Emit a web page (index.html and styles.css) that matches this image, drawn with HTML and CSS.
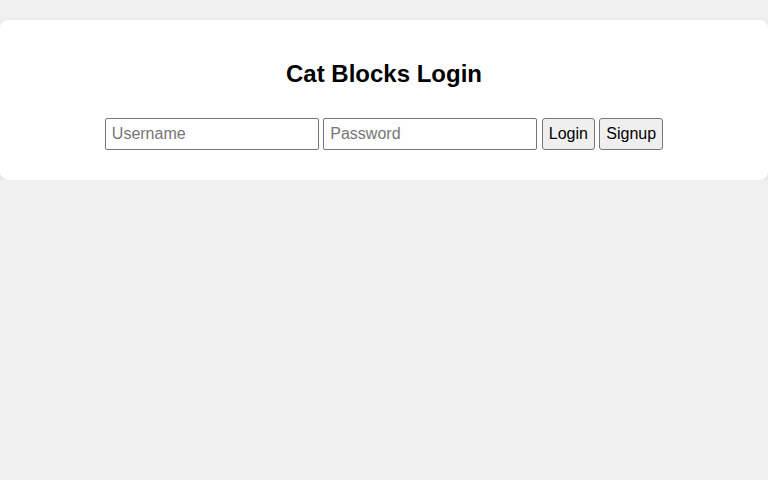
FILE: index.html
```html
<!DOCTYPE html>
<html>
<head>
<meta charset="utf-8">
<link rel="stylesheet" href="styles.css">
</head>
<body>
<div class="card">
  <h2 class="title">Cat Blocks Login</h2>
  <div class="form">
    <input class="field" type="text" placeholder="Username">
    <input class="field" type="password" placeholder="Password">
    <button class="btn">Login</button>
    <button class="btn">Signup</button>
  </div>
</div>
</body>
</html>
```
FILE: styles.css
```css
html, body {
  margin: 0;
  background: #f0f0f0;
  font-family: "Liberation Sans", Arial, sans-serif;
}
body {
  padding-top: 20px;
}
.card {
  background: #fff;
  border-radius: 8px;
  padding: 20px;
  box-shadow: 0 2px 6px rgba(0, 0, 0, 0.1);
  text-align: center;
}
.title {
  font-size: 24px;
  margin: 19.92px 0;
  line-height: 28px;
}
.form {
  line-height: normal;
}
.field, .btn {
  font-family: "Liberation Sans", Arial, sans-serif;
  font-size: 16px;
  padding: 6px;
  margin: 10px 0;
  vertical-align: top;
}
.field {
  width: 200px;
  border: 1px solid #767676;
  border-radius: 2px;
  color: #000;
  background: #fff;
}
.field::placeholder {
  color: #757575;
}
.btn {
  border: 1px solid #767676;
  border-radius: 3px;
  background: #efefef;
  color: #000;
}
```
